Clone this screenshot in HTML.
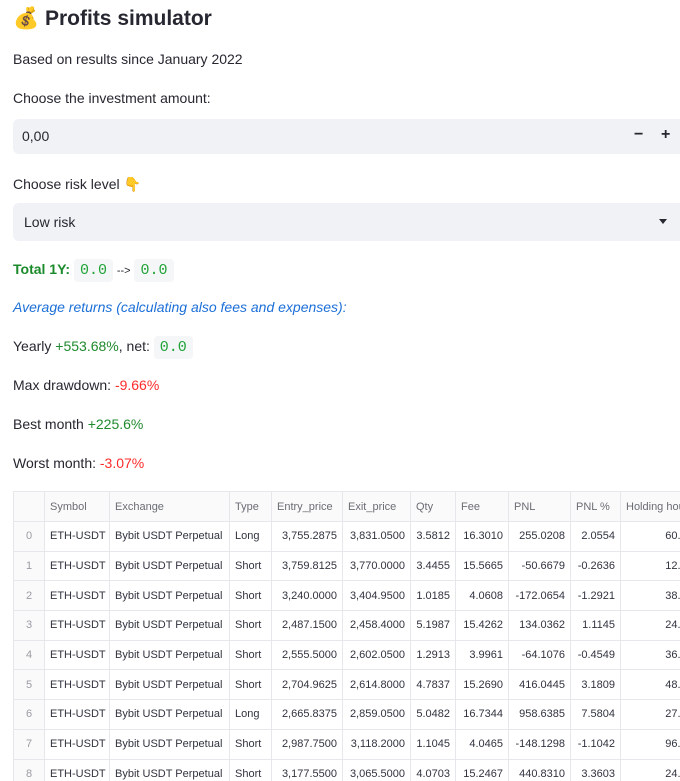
<!DOCTYPE html>
<html><head><meta charset="utf-8"><style>
*{margin:0;padding:0;box-sizing:border-box}
body{width:680px;height:776px;overflow:hidden;background:#fff;font-family:"Liberation Sans",sans-serif;color:#262730;position:relative}
.t{position:absolute;left:13px;font-size:14px;line-height:20px;white-space:nowrap}
.g{color:#1f8a2e}.r{color:#ff2b2b}
code{font-family:"Liberation Mono",monospace;background:#f5f6f8;color:#21a337;padding:3px 6px;border-radius:4px;font-size:15px}
.box{position:absolute;left:13px;width:680px;background:#f0f2f6;border-radius:6px}
.wrap{position:absolute;left:13px;top:491px;width:667px;height:290px;overflow:hidden}
table{border-collapse:collapse;font-size:11px;color:#31333f;table-layout:fixed;width:697px}
td,th{border:1px solid #e6e7ea;height:29.7px;line-height:14px;padding:0 5px;white-space:nowrap;overflow:hidden}
th{font-weight:normal;color:#6b6d75;text-align:left;height:30px;background:#fafafa}
td.n{text-align:right}
td.i{color:#9a9ca3;text-align:center;background:#fafafa}
</style></head><body>
<div class="t" style="top:5px;font-size:21px;line-height:28px;font-weight:bold;color:#262730">💰 Profits simulator</div>
<div class="t" style="top:49px">Based on results since January 2022</div>
<div class="t" style="top:88px">Choose the investment amount:</div>
<div class="box" style="top:119px;height:35px"></div>
<div class="t" style="top:126px;left:22px">0,00</div>
<div class="t" style="top:125px;left:634px;font-size:16px;font-weight:bold">−</div>
<div class="t" style="top:125px;left:661px;font-size:16px;font-weight:bold">+</div>
<div class="t" style="top:174px">Choose risk level 👇</div>
<div class="box" style="top:203px;height:38px"></div>
<div class="t" style="top:212px;left:24px">Low risk</div>
<div style="position:absolute;left:659px;top:219px;width:0;height:0;border-left:4px solid transparent;border-right:4px solid transparent;border-top:5px solid #262730"></div>
<div class="t" style="top:259px"><b style="color:#1a8a2a">Total 1Y:</b> <code>0.0</code> <span style="font-size:11px">--&gt;</span> <code>0.0</code></div>
<div class="t" style="top:297px;font-style:italic;color:#1c6fd8">Average returns (calculating also fees and expenses):</div>
<div class="t" style="top:336px">Yearly <span class="g">+553.68%</span>, net: <code>0.0</code></div>
<div class="t" style="top:375px">Max drawdown: <span class="r">-9.66%</span></div>
<div class="t" style="top:414px">Best month <span class="g">+225.6%</span></div>
<div class="t" style="top:453px">Worst month: <span class="r">-3.07%</span></div>
<div class="wrap"><table>
<colgroup><col style="width:31px"><col style="width:65px"><col style="width:120px"><col style="width:42px"><col style="width:71px"><col style="width:68px"><col style="width:45px"><col style="width:53px"><col style="width:62px"><col style="width:50px"><col style="width:90px"></colgroup>
<tr><th></th><th>Symbol</th><th>Exchange</th><th>Type</th><th>Entry_price</th><th>Exit_price</th><th>Qty</th><th>Fee</th><th>PNL</th><th>PNL %</th><th>Holding hours</th></tr>
<tr><td class="i">0</td><td>ETH-USDT</td><td>Bybit USDT Perpetual</td><td>Long</td><td class="n">3,755.2875</td><td class="n">3,831.0500</td><td class="n">3.5812</td><td class="n">16.3010</td><td class="n">255.0208</td><td class="n">2.0554</td><td class="n">60.0000</td></tr>
<tr><td class="i">1</td><td>ETH-USDT</td><td>Bybit USDT Perpetual</td><td>Short</td><td class="n">3,759.8125</td><td class="n">3,770.0000</td><td class="n">3.4455</td><td class="n">15.5665</td><td class="n">-50.6679</td><td class="n">-0.2636</td><td class="n">12.0000</td></tr>
<tr><td class="i">2</td><td>ETH-USDT</td><td>Bybit USDT Perpetual</td><td>Short</td><td class="n">3,240.0000</td><td class="n">3,404.9500</td><td class="n">1.0185</td><td class="n">4.0608</td><td class="n">-172.0654</td><td class="n">-1.2921</td><td class="n">38.6000</td></tr>
<tr><td class="i">3</td><td>ETH-USDT</td><td>Bybit USDT Perpetual</td><td>Short</td><td class="n">2,487.1500</td><td class="n">2,458.4000</td><td class="n">5.1987</td><td class="n">15.4262</td><td class="n">134.0362</td><td class="n">1.1145</td><td class="n">24.0000</td></tr>
<tr><td class="i">4</td><td>ETH-USDT</td><td>Bybit USDT Perpetual</td><td>Short</td><td class="n">2,555.5000</td><td class="n">2,602.0500</td><td class="n">1.2913</td><td class="n">3.9961</td><td class="n">-64.1076</td><td class="n">-0.4549</td><td class="n">36.0000</td></tr>
<tr><td class="i">5</td><td>ETH-USDT</td><td>Bybit USDT Perpetual</td><td>Short</td><td class="n">2,704.9625</td><td class="n">2,614.8000</td><td class="n">4.7837</td><td class="n">15.2690</td><td class="n">416.0445</td><td class="n">3.1809</td><td class="n">48.0000</td></tr>
<tr><td class="i">6</td><td>ETH-USDT</td><td>Bybit USDT Perpetual</td><td>Long</td><td class="n">2,665.8375</td><td class="n">2,859.0500</td><td class="n">5.0482</td><td class="n">16.7344</td><td class="n">958.6385</td><td class="n">7.5804</td><td class="n">27.1000</td></tr>
<tr><td class="i">7</td><td>ETH-USDT</td><td>Bybit USDT Perpetual</td><td>Short</td><td class="n">2,987.7500</td><td class="n">3,118.2000</td><td class="n">1.1045</td><td class="n">4.0465</td><td class="n">-148.1298</td><td class="n">-1.1042</td><td class="n">96.0000</td></tr>
<tr><td class="i">8</td><td>ETH-USDT</td><td>Bybit USDT Perpetual</td><td>Short</td><td class="n">3,177.5500</td><td class="n">3,065.5000</td><td class="n">4.0703</td><td class="n">15.2467</td><td class="n">440.8310</td><td class="n">3.3603</td><td class="n">24.0000</td></tr>
</table></div>
</body></html>
